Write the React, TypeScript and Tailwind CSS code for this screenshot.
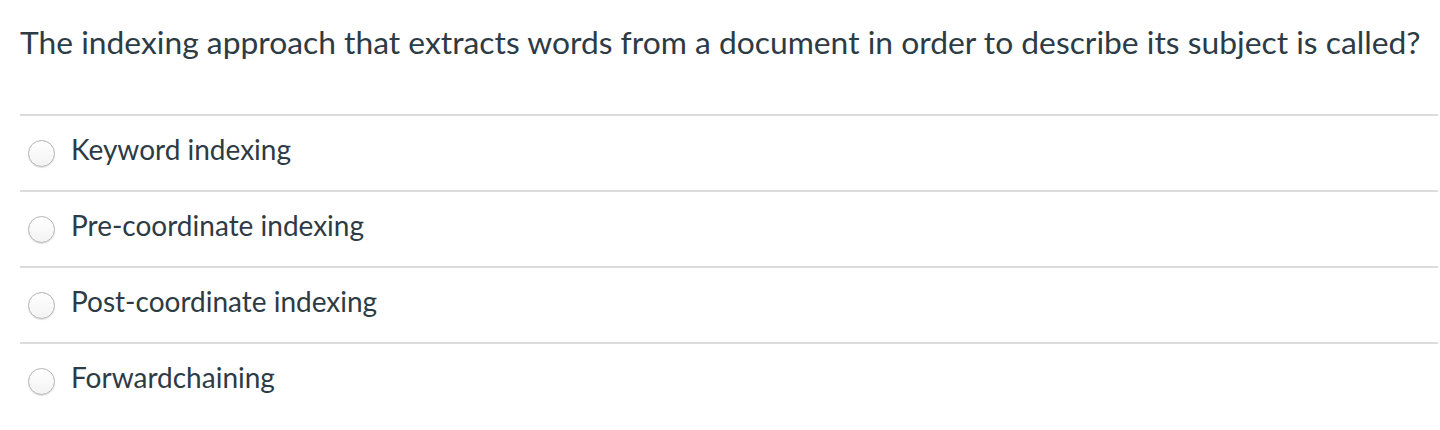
import React from "react";

const ANSWERS = [
  "Keyword indexing",
  "Pre-coordinate indexing",
  "Post-coordinate indexing",
  "Forwardchaining",
];

function Radio() {
  return (
    <span className="w-[27px] h-[27px] rounded-full border border-[#b3b3b3] bg-gradient-to-b from-white to-[#f3f3f3] shadow-[0_1px_1px_rgba(0,0,0,0.12)] shrink-0" />
  );
}

export default function App() {
  return (
    <div className="w-[1440px] h-[430px] bg-white text-[#2d3b45] font-['Lato','Open_Sans',sans-serif] pl-[20px] pr-[2px]">
      <div className="pt-[22px] pb-[52px] text-[31.8px] leading-[40px]">
        The indexing approach that extracts words from a document in order to describe its subject is called?
      </div>
      <div className="flex flex-col">
        {ANSWERS.map((a) => (
          <div key={a} className="h-[76px] border-t-2 border-[#dcdcdc] flex items-center gap-[16px] pl-[8px]">
            <Radio />
            <span className="text-[28px] leading-[34px] -mt-[8px]">{a}</span>
          </div>
        ))}
      </div>
    </div>
  );
}
